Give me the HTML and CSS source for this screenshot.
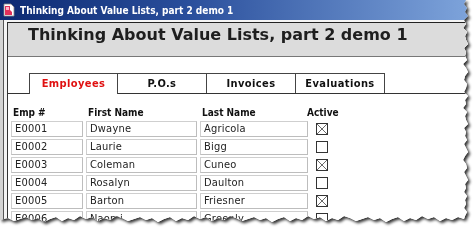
FILE: index.html
```html
<!DOCTYPE html>
<html>
<head>
<meta charset="utf-8">
<link rel="stylesheet" href="styles.css">
</head>
<body>
<div class="stage">
  <div class="sheet">
    <div class="titlebar">
      <svg class="appicon" width="12" height="14" viewBox="0 0 12 14">
        <path d="M1 1h7l3 3v9H1z" fill="#fff" stroke="#888" stroke-width="0.8"/>
        <path d="M2 3h5v4l2 2v3H2z" fill="#e0305a"/>
        <path d="M3 4h3v3H3z" fill="#ffb0c8"/>
      </svg>
      <span class="wintitle">Thinking About Value Lists, part 2 demo 1</span>
    </div>
    <div class="frame">
      <div class="content">
        <div class="header"><h1 class="title">Thinking About Value Lists, part 2 demo 1</h1></div>
        <div class="tabbar">
          <div class="tab active">Employees</div>
          <div class="tab">P.O.s</div>
          <div class="tab">Invoices</div>
          <div class="tab">Evaluations</div>
        </div>
        <div class="grid">
          <div class="lbl">Emp #</div>
          <div class="lbl">First Name</div>
          <div class="lbl">Last Name</div>
          <div class="lbl lbl-active">Active</div>

          <div class="fld">E0001</div><div class="fld">Dwayne</div><div class="fld">Agricola</div>
          <div class="chk"><svg width="12" height="12" viewBox="0 0 12 12"><rect x="0.5" y="0.5" width="11" height="11" fill="#fff" stroke="#333"/><path d="M1 1L11 11M11 1L1 11" stroke="#444" stroke-width="0.8"/></svg></div>

          <div class="fld">E0002</div><div class="fld">Laurie</div><div class="fld">Bigg</div>
          <div class="chk"><svg width="12" height="12" viewBox="0 0 12 12"><rect x="0.5" y="0.5" width="11" height="11" fill="#fff" stroke="#333"/></svg></div>

          <div class="fld">E0003</div><div class="fld">Coleman</div><div class="fld">Cuneo</div>
          <div class="chk"><svg width="12" height="12" viewBox="0 0 12 12"><rect x="0.5" y="0.5" width="11" height="11" fill="#fff" stroke="#333"/><path d="M1 1L11 11M11 1L1 11" stroke="#444" stroke-width="0.8"/></svg></div>

          <div class="fld">E0004</div><div class="fld">Rosalyn</div><div class="fld">Daulton</div>
          <div class="chk"><svg width="12" height="12" viewBox="0 0 12 12"><rect x="0.5" y="0.5" width="11" height="11" fill="#fff" stroke="#333"/></svg></div>

          <div class="fld">E0005</div><div class="fld">Barton</div><div class="fld">Friesner</div>
          <div class="chk"><svg width="12" height="12" viewBox="0 0 12 12"><rect x="0.5" y="0.5" width="11" height="11" fill="#fff" stroke="#333"/><path d="M1 1L11 11M11 1L1 11" stroke="#444" stroke-width="0.8"/></svg></div>

          <div class="fld">E0006</div><div class="fld">Naomi</div><div class="fld">Greenly</div>
          <div class="chk"><svg width="12" height="12" viewBox="0 0 12 12"><rect x="0.5" y="0.5" width="11" height="11" fill="#fff" stroke="#333"/></svg></div>
        </div>
      </div>
    </div>
  </div>
</div>
</body>
</html>
```

FILE: styles.css
```css
html, body {
  margin: 0;
  padding: 0;
  background: #fff;
}
body {
  width: 474px;
  height: 227px;
  overflow: hidden;
  font-family: "DejaVu Sans Condensed", "DejaVu Sans", sans-serif;
}
.stage {
  width: 474px;
  height: 227px;
  filter: drop-shadow(2px 2px 1.5px rgba(0,0,0,0.8));
}
.sheet {
  width: 474px;
  height: 227px;
  background: #d8d8d8;
  overflow: hidden;
  clip-path: polygon(0 0, 466px 0, 464px 4px, 467px 8px, 465px 12px, 468px 16px, 464px 20px, 466px 24px, 463px 28px, 467px 32px, 465px 36px, 466px 40px, 468px 44px, 464px 48px, 466px 52px, 465px 56px, 467px 60px, 463px 64px, 466px 68px, 468px 72px, 465px 76px, 464px 80px, 467px 84px, 466px 88px, 464px 92px, 468px 96px, 465px 100px, 466px 104px, 463px 108px, 467px 112px, 465px 116px, 466px 120px, 468px 124px, 464px 128px, 466px 132px, 465px 136px, 467px 140px, 464px 144px, 466px 148px, 468px 152px, 465px 156px, 463px 160px, 466px 164px, 467px 168px, 464px 172px, 466px 176px, 468px 180px, 465px 184px, 466px 188px, 464px 192px, 467px 196px, 465px 200px, 466px 204px, 464px 208px, 467px 212px, 465px 216px, 464px 219px, 458px 217px, 452px 220px, 446px 218px, 440px 221px, 434px 217px, 428px 219px, 422px 216px, 416px 220px, 410px 218px, 404px 221px, 398px 217px, 392px 219px, 386px 222px, 380px 218px, 374px 220px, 368px 217px, 362px 219px, 356px 221px, 350px 218px, 344px 216px, 338px 220px, 332px 218px, 326px 221px, 320px 217px, 314px 219px, 308px 216px, 302px 220px, 296px 218px, 290px 221px, 284px 217px, 278px 219px, 272px 222px, 266px 218px, 260px 220px, 254px 217px, 248px 219px, 242px 221px, 236px 218px, 230px 216px, 224px 220px, 218px 218px, 212px 221px, 206px 217px, 200px 219px, 194px 216px, 188px 220px, 182px 218px, 176px 221px, 170px 217px, 164px 219px, 158px 222px, 152px 218px, 146px 220px, 140px 217px, 134px 219px, 128px 221px, 122px 218px, 116px 216px, 110px 220px, 104px 218px, 98px 221px, 92px 217px, 86px 219px, 80px 216px, 74px 220px, 68px 218px, 62px 221px, 56px 217px, 50px 219px, 44px 222px, 38px 218px, 32px 220px, 26px 217px, 20px 219px, 14px 221px, 8px 218px, 0 220px);
}
.titlebar {
  height: 20px;
  background: linear-gradient(to right, #0c2a72 0%, #2a4f9c 40%, #7fa5dc 100%);
  display: flex;
  align-items: center;
  gap: 5px;
  padding-left: 3px;
}
.appicon {
  display: block;
  flex: none;
}
.wintitle {
  color: #fff;
  font-weight: bold;
  font-size: 10px;
  white-space: nowrap;
}
.frame {
  padding-top: 2px;
  padding-left: 7px;
  background: linear-gradient(to right, #d4d4d4 0 3px, #555 3px 4px, #f4f4f4 4px 7px);
  height: 205px;
}
.content {
  border-left: 1px solid #333;
  border-top: 1px solid #222;
  background: #fff;
  height: 204px;
}
.header {
  background: #dcdcdc;
  border-bottom: 1px solid #777;
  height: 34px;
  padding-left: 20px;
  box-sizing: border-box;
}
.title {
  margin: 0;
  padding-top: 2px;
  font-family: "DejaVu Sans", sans-serif;
  font-size: 16px;
  line-height: 20px;
  font-weight: bold;
  color: #1e1e1e;
  white-space: nowrap;
}
.tabbar {
  margin-top: 16px;
  display: flex;
  padding-left: 21px;
  border-bottom: 1px solid #333;
}
.tab {
  width: 89px;
  height: 20px;
  box-sizing: border-box;
  border: 1px solid #444;
  border-bottom: none;
  border-left: none;
  font-weight: bold;
  font-size: 11px;
  line-height: 20px;
  text-align: center;
  color: #111;
  letter-spacing: 0.4px;
}
.tab:first-child {
  border-left: 1px solid #444;
}
.tab.active {
  color: #e01010;
  margin-bottom: -1px;
  height: 21px;
  background: #fff;
}
.grid {
  display: grid;
  grid-template-columns: 72px 111px 108px 30px;
  column-gap: 3px;
  row-gap: 2px;
  padding-left: 3px;
  padding-top: 13px;
}
.lbl {
  font-weight: bold;
  font-size: 10px;
  line-height: 12px;
  padding-left: 2px;
  color: #111;
  margin-bottom: 0;
  align-self: end;
}
.lbl-active {
  margin-left: -6px;
}
.fld {
  height: 16px;
  box-sizing: border-box;
  border: 1px solid #cfcfcf;
  border-right-color: #bdbdbd;
  border-bottom-color: #bdbdbd;
  font-size: 11px;
  line-height: 14px;
  padding-left: 3px;
  color: #222;
  white-space: nowrap;
  overflow: hidden;
  letter-spacing: 0.2px;
}
.chk {
  height: 16px;
  padding-left: 5px;
  display: flex;
  align-items: center;
}
.chk svg {
  display: block;
}
```
